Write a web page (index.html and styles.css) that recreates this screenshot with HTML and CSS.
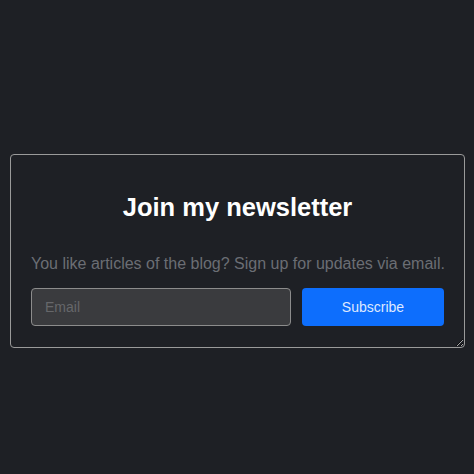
FILE: index.html
```html
<!DOCTYPE html>
<html lang="en">
<head>
<meta charset="utf-8">
<title>Newsletter</title>
<link rel="stylesheet" href="styles.css">
</head>
<body>
<main class="page">
  <section class="card">
    <h2 class="title">Join my newsletter</h2>
    <p class="lead">You like articles of the blog? Sign up for updates via email.</p>
    <form class="form">
      <input class="email" type="email" placeholder="Email" autofocus>
      <button class="subscribe" type="button">Subscribe</button>
    </form>
  </section>
</main>
</body>
</html>
```
FILE: styles.css
```css
html, body {
  margin: 0;
  background: #1e2025;
  font-family: "Liberation Sans", Arial, sans-serif;
}
.page {
  padding: 154px 9px 0 10px;
}
.card {
  box-sizing: border-box;
  width: 455px;
  border: 1px solid #9a9a9a;
  border-radius: 4px;
  padding: 20px 20px 21px;
  background: #1e2025;
  resize: both;
  overflow: auto;
}
.title {
  margin: 18px 0 30px;
  text-align: center;
  color: #ffffff;
  font-size: 25.5px;
  line-height: 29px;
  font-weight: bold;
}
.lead {
  margin: 0 0 12px;
  color: #6b6e74;
  font-size: 16px;
  line-height: 24px;
  white-space: nowrap;
}
.form {
  display: flex;
  gap: 11px;
  margin: 0;
}
.email {
  flex: 1;
  box-sizing: border-box;
  height: 38px;
  border: 1px solid #8c8c8c;
  border-radius: 4px;
  background: #3a3b3e;
  padding: 0 13px;
  color: #ddd;
  font-family: "Liberation Sans", Arial, sans-serif;
  font-size: 14px;
  outline: none;
  caret-color: #b5b5b5;
}
.email::placeholder {
  color: #66676a;
}
.subscribe {
  width: 142px;
  height: 38px;
  border: none;
  border-radius: 4px;
  background: #0d6efd;
  color: #dfe9ff;
  font-family: "Liberation Sans", Arial, sans-serif;
  font-size: 14px;
}
```
